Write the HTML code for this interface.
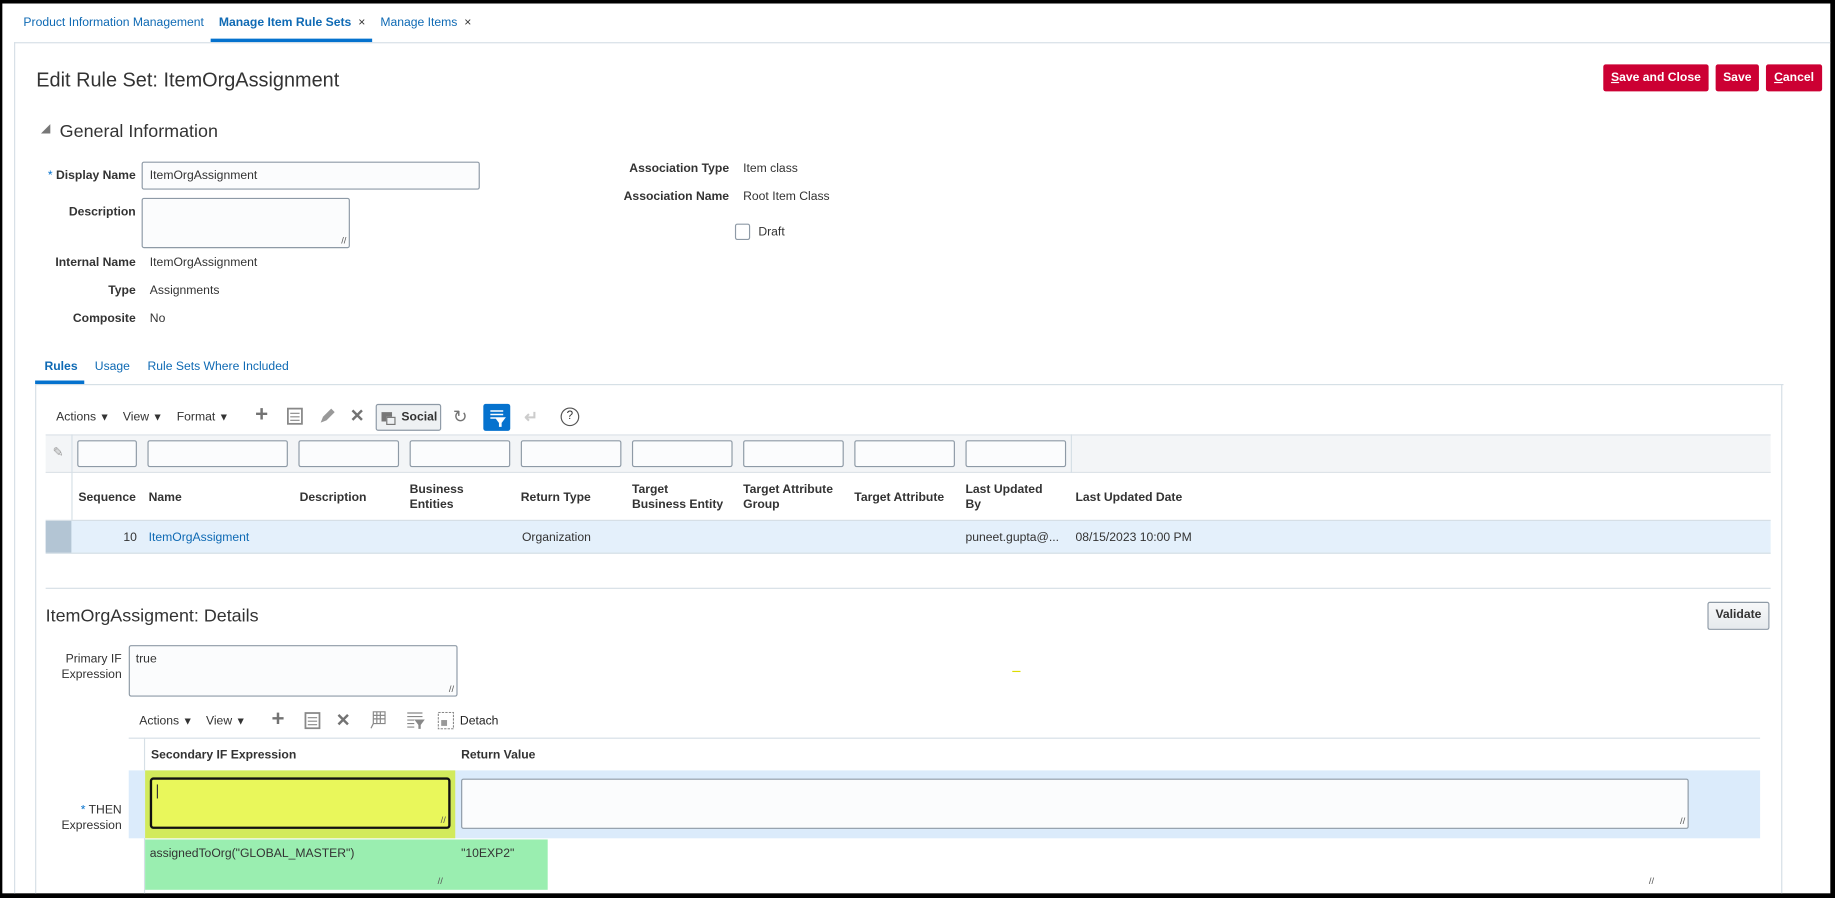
<!DOCTYPE html>
<html><head><meta charset="utf-8">
<style>
*{margin:0;padding:0;box-sizing:border-box}
html,body{width:1835px;height:898px;overflow:hidden;background:#000}
#w{position:absolute;left:0;top:0;width:1568px;height:767px;transform:scale(1.17028,1.1708);transform-origin:0 0;background:#000;font-family:"Liberation Sans",Arial,sans-serif;font-size:10.4px;line-height:1.4;color:#333}
#pg{position:absolute;left:2px;top:3px;width:1562px;height:760px;background:#fff;overflow:hidden}
.a{position:absolute;white-space:nowrap}
.b{font-weight:bold}
.lk{color:#0f6ab4}
.in{position:absolute;border:1px solid #8e9aa6;background:#fbfcfd;border-radius:2px}
.rs{position:absolute;right:2px;bottom:1px;font-size:8px;color:#555;line-height:8px}
.r{text-align:right}
.hl{position:absolute;height:1px;background:#d6dfe6}
.vl{position:absolute;width:1px;background:#d6dfe6}
.btn{position:absolute;background:#cc0033;color:#fff;font-weight:bold;border-radius:2px;text-align:center;line-height:23px;height:23px}
.ic{position:absolute;color:#737373;font-weight:bold;line-height:1.15}
</style></head><body><div id="w"><div id="pg">
<!-- tabs -->
<div class="a lk" style="left:18px;top:10px">Product Information Management</div>
<div class="a lk b" style="left:185px;top:10px">Manage Item Rule Sets <span style="color:#333;font-weight:normal;margin-left:3px">×</span></div>
<div class="a" style="left:178px;top:30px;width:138px;height:3px;background:#0572ce"></div>
<div class="a lk" style="left:323px;top:10px">Manage Items <span style="color:#333;margin-left:3px">×</span></div>
<div class="hl" style="left:10px;top:33px;width:1560px"></div>
<div class="vl" style="left:10px;top:33px;height:740px"></div>
<!-- title -->
<div class="a" style="left:29px;top:54px;font-size:17px;color:#333">Edit Rule Set: ItemOrgAssignment</div>
<div class="btn" style="left:1368px;top:52px;width:90px"><u>S</u>ave and Close</div>
<div class="btn" style="left:1464px;top:52px;width:37px">Save</div>
<div class="btn" style="left:1507px;top:52px;width:48px"><u>C</u>ancel</div>
<!-- general info -->
<div class="a" style="left:33px;top:103px;width:0;height:0;border-left:8px solid transparent;border-bottom:8px solid #777"></div>
<div class="a" style="left:49px;top:99px;font-size:15.3px;color:#333">General Information</div>
<div class="a b r" style="left:20px;width:94px;top:141px"><span style="color:#0572ce;font-weight:normal">*</span> Display Name</div>
<div class="in" style="left:119px;top:135px;width:289px;height:24px"><span class="a" style="left:6px;top:5px">ItemOrgAssignment</span></div>
<div class="a b r" style="left:20px;width:94px;top:172px">Description</div>
<div class="in" style="left:119px;top:166px;width:178px;height:43px"><span class="rs">//</span></div>
<div class="a b r" style="left:20px;width:94px;top:215px">Internal Name</div>
<div class="a" style="left:126px;top:215px">ItemOrgAssignment</div>
<div class="a b r" style="left:20px;width:94px;top:239px">Type</div>
<div class="a" style="left:126px;top:239px">Assignments</div>
<div class="a b r" style="left:20px;width:94px;top:263px">Composite</div>
<div class="a" style="left:126px;top:263px">No</div>
<div class="a b r" style="left:500px;width:121px;top:135px">Association Type</div>
<div class="a" style="left:633px;top:135px">Item class</div>
<div class="a b r" style="left:500px;width:121px;top:159px">Association Name</div>
<div class="a" style="left:633px;top:159px">Root Item Class</div>
<div class="a" style="left:626px;top:188px;width:13px;height:14px;border:1px solid #8e9aa6;border-radius:2px"></div>
<div class="a" style="left:646px;top:189px">Draft</div>
<!-- subtabs -->
<div class="a b" style="left:36px;top:304px;color:#0f6ab4">Rules</div>
<div class="a lk" style="left:79px;top:304px">Usage</div>
<div class="a lk" style="left:124px;top:304px">Rule Sets Where Included</div>
<div class="hl" style="left:28px;top:325px;width:1494px"></div>
<div class="a" style="left:28px;top:322px;width:42px;height:3px;background:#0572ce"></div>
<div class="vl" style="left:28px;top:325px;height:440px"></div>
<div class="vl" style="left:1520px;top:325px;height:440px"></div>
<!-- toolbar -->
<div class="a" style="left:46px;top:347px">Actions <span style="font-size:9px">▼</span></div>
<div class="a" style="left:103px;top:347px">View <span style="font-size:9px">▼</span></div>
<div class="a" style="left:149px;top:347px">Format <span style="font-size:9px">▼</span></div>
<div class="ic" style="left:216px;top:341px;font-size:19px">+</div>
<svg class="a" style="left:243px;top:345px" width="14" height="15"><rect x="1" y="1" width="12" height="13" fill="none" stroke="#888" stroke-width="1.5"/><path d="M3 5h8M3 8h8M3 11h8" stroke="#888"/></svg>
<svg class="a" style="left:270px;top:345px" width="15" height="15"><path d="M2 13l2-5 7-7 3 3-7 7z" fill="#999"/></svg>
<div class="ic" style="left:297px;top:344px;font-size:15px">✕</div>
<div class="a" style="left:319px;top:342px;width:56px;height:23px;border:1px solid #8e9aa6;border-radius:2px;background:#eef1f3"><span class="a" style="left:4px;top:6px;width:9px;height:8px;background:#777"></span><span class="a" style="left:8px;top:10px;width:8px;height:7px;border:1px solid #777;background:#eef1f3"></span><span class="a b" style="left:21px;top:4px">Social</span></div>
<div class="ic" style="left:385px;top:345px;font-size:15px;font-weight:normal">↻</div>
<div class="a" style="left:411px;top:342px;width:23px;height:23px;background:#0572ce;border-radius:2px"><svg width="23" height="23"><path d="M6 6h11M6 9h11M6 12h6M11 12h7l-3 4v3h-1v-3z" stroke="#fff" fill="#fff" stroke-width="1.3"/></svg></div>
<div class="ic" style="left:446px;top:345px;color:#ccc;font-size:14px">↵</div>
<div class="a" style="left:477px;top:345px;width:16px;height:16px;border:1.5px solid #555;border-radius:50%;font-size:10px;text-align:center;line-height:14px">?</div>
<!-- filter row -->
<div class="a" style="left:37px;top:368px;width:1474px;height:33px;background:#f3f5f7;border-top:1px solid #dde3e8;border-bottom:1px solid #dde3e8"></div>
<div class="vl" style="left:59px;top:368px;height:101px"></div>
<div class="a" style="left:43px;top:378px;color:#999;font-size:11px;line-height:1.15">✎</div>
<div class="in" style="left:64px;top:373px;width:51px;height:23px"></div>
<div class="in" style="left:124px;top:373px;width:120px;height:23px"></div>
<div class="in" style="left:253px;top:373px;width:86px;height:23px"></div>
<div class="in" style="left:348px;top:373px;width:86px;height:23px"></div>
<div class="in" style="left:443px;top:373px;width:86px;height:23px"></div>
<div class="in" style="left:538px;top:373px;width:86px;height:23px"></div>
<div class="in" style="left:633px;top:373px;width:86px;height:23px"></div>
<div class="in" style="left:728px;top:373px;width:86px;height:23px"></div>
<div class="in" style="left:823px;top:373px;width:86px;height:23px"></div>
<div class="vl" style="left:913px;top:368px;height:33px"></div>
<!-- headers -->
<div class="a b" style="left:65px;top:416px">Sequence</div>
<div class="a b" style="left:125px;top:416px">Name</div>
<div class="a b" style="left:254px;top:416px">Description</div>
<div class="a b" style="left:348px;top:409px;line-height:13px">Business<br>Entities</div>
<div class="a b" style="left:443px;top:416px">Return Type</div>
<div class="a b" style="left:538px;top:409px;line-height:13px">Target<br>Business Entity</div>
<div class="a b" style="left:633px;top:409px;line-height:13px">Target Attribute<br>Group</div>
<div class="a b" style="left:728px;top:416px">Target Attribute</div>
<div class="a b" style="left:823px;top:409px;line-height:13px">Last Updated<br>By</div>
<div class="a b" style="left:917px;top:416px">Last Updated Date</div>
<div class="a" style="left:37px;top:441px;width:1474px;height:29px;background:#e4f0fb;border-top:1px solid #d6dfe6;border-bottom:1px solid #d6dfe6"></div>
<div class="a" style="left:37px;top:442px;width:22px;height:27px;background:#b3c5d4"></div>
<div class="a r" style="left:70px;width:45px;top:450px">10</div>
<div class="a lk" style="left:125px;top:450px">ItemOrgAssigment</div>
<div class="a" style="left:444px;top:450px">Organization</div>
<div class="a" style="left:823px;top:450px">puneet.gupta@...</div>
<div class="a" style="left:917px;top:450px">08/15/2023 10:00 PM</div>
<div class="hl" style="left:37px;top:499px;width:1474px"></div>
<!-- details -->
<div class="a" style="left:37px;top:513px;font-size:15.3px">ItemOrgAssigment: Details</div>
<div class="a b" style="left:1457px;top:511px;width:53px;height:24px;border:1px solid #8e9aa6;border-radius:2px;background:linear-gradient(#f7f8f9,#e6eaed);text-align:center;line-height:22px">Validate</div>
<div class="a r" style="left:30px;width:72px;top:554px;line-height:13px;color:#333">Primary IF<br>Expression</div>
<div class="in" style="left:108px;top:548px;width:281px;height:44px"><span class="a" style="left:5px;top:5px">true</span><span class="rs">//</span></div>
<div class="a" style="left:863px;top:570px;width:7px;height:1px;background:#dd0"></div>
<div class="a" style="left:117px;top:607px">Actions <span style="font-size:9px">▼</span></div>
<div class="a" style="left:174px;top:607px">View <span style="font-size:9px">▼</span></div>
<div class="ic" style="left:230px;top:601px;font-size:19px">+</div>
<svg class="a" style="left:258px;top:605px" width="14" height="15"><rect x="1" y="1" width="12" height="13" fill="none" stroke="#888" stroke-width="1.5"/><path d="M3 5h8M3 8h8M3 11h8" stroke="#888"/></svg>
<div class="ic" style="left:285px;top:604px;font-size:15px">✕</div>
<svg class="a" style="left:312px;top:604px" width="16" height="16"><path d="M5 1h10v10H5zM5 4h10M5 7h10M8 1v10M11 1v10M5 11l-2 4" stroke="#888" fill="none"/></svg>
<svg class="a" style="left:345px;top:605px" width="16" height="15"><path d="M1 1h13M1 4h13M1 7h6M1 10h6M1 13h6M8 7h7l-3 4v3h-1v-3z" stroke="#888" fill="#888"/></svg>
<svg class="a" style="left:372px;top:605px" width="14" height="15"><rect x="0.5" y="0.5" width="13" height="14" fill="none" stroke="#888" stroke-dasharray="2 1"/><rect x="3" y="7" width="5" height="5" fill="#999"/></svg>
<div class="a" style="left:391px;top:607px;color:#222">Detach</div>
<div class="hl" style="left:108px;top:627px;width:1394px"></div>
<div class="vl" style="left:121px;top:627px;height:140px"></div>
<div class="a b" style="left:127px;top:636px">Secondary IF Expression</div>
<div class="a b" style="left:392px;top:636px">Return Value</div>
<div class="a" style="left:108px;top:655px;width:1394px;height:58px;background:#dbebfb"></div>
<div class="a" style="left:122px;top:655px;width:265px;height:58px;background:#d2ea5c"></div>
<div class="a" style="left:126px;top:661px;width:257px;height:44px;background:#e9f75b;border:2px solid #111;border-radius:3px"><span class="a" style="left:4px;top:4px;width:1px;height:12px;background:#333"></span><span class="rs">//</span></div>
<div class="in" style="left:392px;top:662px;width:1049px;height:43px;background:#fbfcfd"><span class="rs">//</span></div>
<div class="a r" style="left:30px;width:72px;top:683px;line-height:13px"><span style="color:#0572ce">*</span> THEN<br>Expression</div>
<div class="a" style="left:122px;top:714px;width:344px;height:43px;background:#9aeeb0"></div>
<div class="a" style="left:126px;top:720px">assignedToOrg("GLOBAL_MASTER")</div>
<div class="a" style="left:392px;top:720px">"10EXP2"</div>
<div class="a" style="left:372px;top:745px;font-size:8px;color:#555;line-height:1.15">//</div>
<div class="a" style="left:1407px;top:745px;font-size:8px;color:#555;line-height:1.15">//</div>
</div></div></body></html>
